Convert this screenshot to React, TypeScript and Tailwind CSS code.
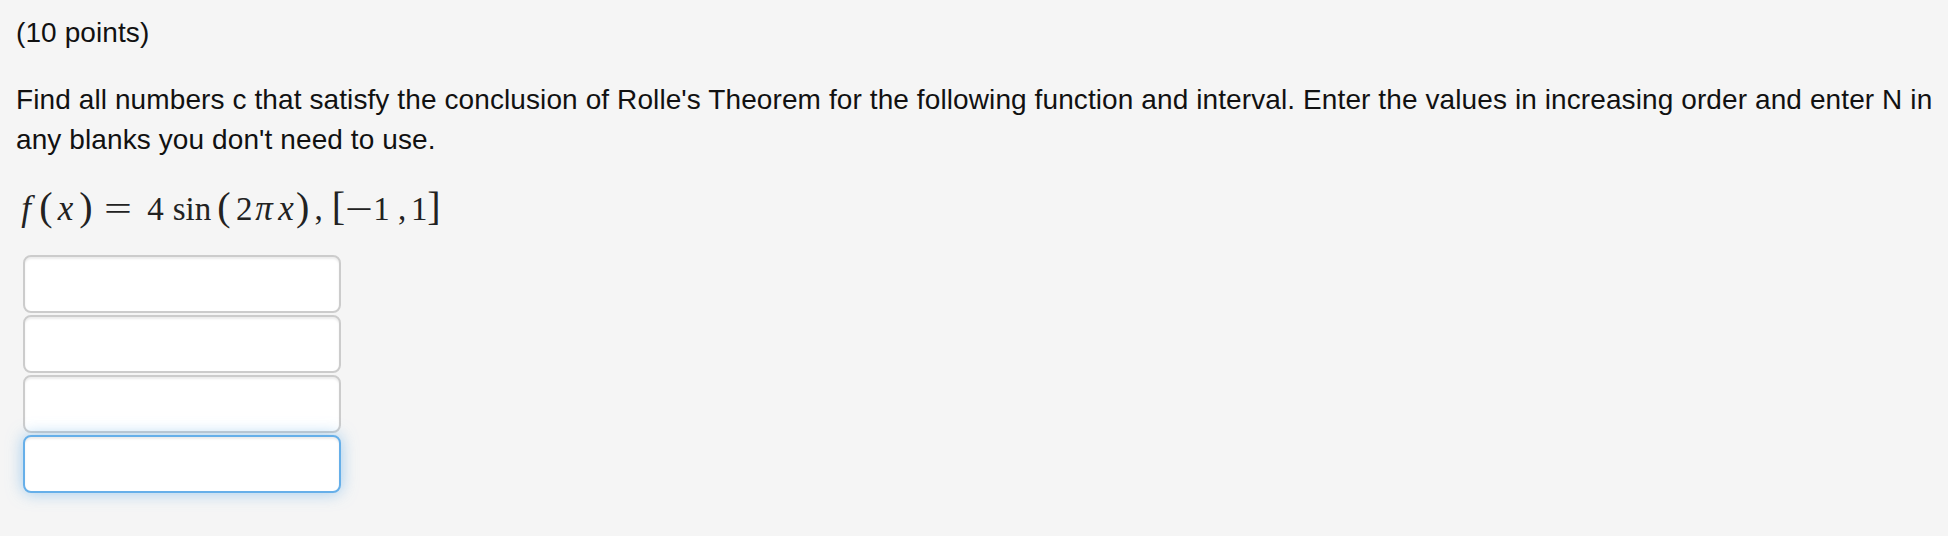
const tokens: { t: string; w: string; kind?: "it" | "big" | "op" }[] = [
  { t: "f", w: "w-[20px]", kind: "it" },
  { t: "(", w: "w-[20px]", kind: "big" },
  { t: "x", w: "w-[19px]", kind: "it" },
  { t: ")", w: "w-[22px]", kind: "big" },
  { t: "=", w: "w-[42px]", kind: "op" },
  { t: "4", w: "w-[33px]" },
  { t: "sin", w: "w-[40px]" },
  { t: "(", w: "w-[24px]", kind: "big" },
  { t: "2", w: "w-[16px]" },
  { t: "π", w: "w-[24px]", kind: "it" },
  { t: "x", w: "w-[20px]", kind: "it" },
  { t: ")", w: "w-[12px]", kind: "big" },
  { t: ",", w: "w-[21px]" },
  { t: "[", w: "w-[19px]", kind: "big" },
  { t: "−", w: "w-[22px]", kind: "op" },
  { t: "1", w: "w-[23px]" },
  { t: ",", w: "w-[18px]" },
  { t: "1", w: "w-[16px]" },
  { t: "]", w: "w-[14px]", kind: "big" },
];

const kindClass = {
  it: "italic text-[35px]",
  big: "text-[40px] font-light",
  op: "text-[33px] scale-x-150",
};

function Formula() {
  return (
    <div className="mt-[25px] flex h-[44px] items-baseline font-['Liberation_Serif',serif] text-[33px] leading-[44px] tracking-normal text-[#222]">
      {tokens.map((tok, i) => (
        <span key={i} className={`${tok.w} inline-block text-center whitespace-nowrap ${tok.kind ? kindClass[tok.kind] : ""}`}>
          {tok.t}
        </span>
      ))}
    </div>
  );
}

function AnswerBox({ focused }: { focused?: boolean }) {
  return (
    <input
      type="text"
      className={
        focused
          ? "block h-[58px] w-[318px] rounded-[8px] border-2 border-[#66afe9] bg-white px-3 outline-none shadow-[inset_0_2px_2px_rgba(0,0,0,0.075),0_0_16px_rgba(102,175,233,0.6)]"
          : "block h-[58px] w-[318px] rounded-[8px] border-2 border-[#cccccc] bg-white px-3 outline-none shadow-[inset_0_2px_2px_rgba(0,0,0,0.075)]"
      }
    />
  );
}

export default function App() {
  return (
    <div className="h-[536px] w-full bg-[#f5f5f5] pl-4 pr-[4px] pt-[13px] font-['Liberation_Sans',Arial,sans-serif] text-[28px] leading-[40px] tracking-[0.1px] text-[#111]">
      <p>(10 points)</p>
      <p className="mt-[27px]">
        Find all numbers c that satisfy the conclusion of Rolle's Theorem for the following function and interval. Enter
        the values in increasing order and enter N in any blanks you don't need to use.
      </p>
      <Formula />
      <div className="ml-[7px] mt-[26px] flex flex-col gap-[2px]">
        <AnswerBox />
        <AnswerBox />
        <AnswerBox />
        <AnswerBox focused />
      </div>
    </div>
  );
}
